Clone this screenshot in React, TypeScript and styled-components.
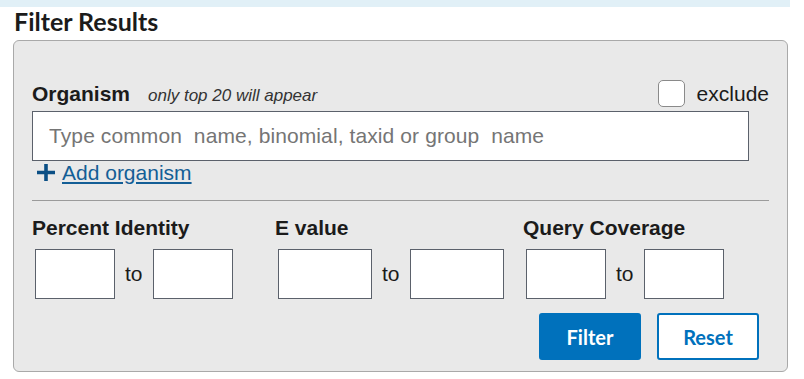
import React from "react"
import styled, { createGlobalStyle } from "styled-components"

const GlobalStyle = createGlobalStyle`
  body {
    margin: 0;
    background: #fff;
    font-family: "Liberation Sans", Arial, sans-serif;
    color: #1b1b1b;
  }
`

const TopBand = styled.div`
  width: 790px;
  height: 7px;
  background: #e1f0f7;
`

const Title = styled.h2`
  margin: 0 0 4px 14px;
  font-family: Lato, "Open Sans", sans-serif;
  font-weight: 700;
  font-size: 25px;
  line-height: 29px;
  color: #1b1b1b;
`

const Panel = styled.section`
  margin-left: 13px;
  width: 775px;
  height: 332px;
  box-sizing: border-box;
  padding: 39px 18px 11px 18px;
  background: #e9e9e9;
  border: 1px solid #a9a9a9;
  border-radius: 6px;
`

const HeaderRow = styled.div`
  display: flex;
  align-items: center;
  justify-content: space-between;
  height: 27px;
`

const LabelGroup = styled.div`
  display: flex;
  align-items: baseline;
  gap: 18px;
`

const Label = styled.span`
  font-weight: 700;
  font-size: 21px;
  line-height: 24px;
  color: #1b1b1b;
`

const Hint = styled.span`
  font-style: italic;
  font-size: 17px;
  color: #333;
`

const Exclude = styled.label`
  display: flex;
  align-items: center;
  gap: 12px;
  font-size: 21px;
  line-height: 24px;
  color: #1b1b1b;
`

const Checkbox = styled.span`
  width: 27px;
  height: 27px;
  box-sizing: border-box;
  background: #fff;
  border: 1px solid #8a8a8a;
  border-radius: 5px;
`

const TextInput = styled.input<{ $w: number }>`
  display: block;
  box-sizing: border-box;
  width: ${p => p.$w}px;
  height: 50px;
  margin: 0;
  padding: 0 16px;
  border: 1px solid #5b616b;
  border-radius: 0;
  background: #fff;
  font-family: "Liberation Sans", Arial, sans-serif;
  font-size: 21px;
  letter-spacing: 0.1px;
  color: #1b1b1b;
  outline: none;

  &::placeholder {
    color: #757575;
  }
`

const OrganismInput = styled(TextInput)`
  margin-top: 4px;
`

const AddLink = styled.a`
  display: inline-flex;
  align-items: center;
  gap: 7px;
  padding-left: 5px;
  font-size: 21px;
  line-height: 24px;
  color: #135e96;
  text-decoration: underline;
  text-underline-offset: 2px;
  cursor: pointer;

  svg {
    margin-top: -2px;
  }
`

const Divider = styled.hr`
  margin: 15px 0 15px 0;
  border: 0;
  border-top: 1px solid #9b9b9b;
  height: 0;
`

const Ranges = styled.div`
  display: grid;
  grid-template-columns: 243px 248px auto;
`

const RangeRow = styled.div`
  display: flex;
  align-items: center;
  gap: 10px;
  margin-top: 9px;
  padding-left: 3px;
`

const To = styled.span`
  font-size: 21px;
  color: #1b1b1b;
`

const ButtonRow = styled.div`
  display: flex;
  justify-content: flex-end;
  gap: 16px;
  margin-top: 14px;
  padding-right: 10px;
`

const Button = styled.button<{ $primary?: boolean }>`
  width: 102px;
  height: 47px;
  box-sizing: border-box;
  border-radius: 3px;
  border: 2px solid #0071bc;
  background: ${p => (p.$primary ? "#0071bc" : "#fff")};
  color: ${p => (p.$primary ? "#fff" : "#0071bc")};
  font-family: Lato, "Open Sans", sans-serif;
  font-weight: 700;
  font-size: 20px;
  cursor: pointer;
`

const PlusIcon = () => (
  <svg width="18" height="17" viewBox="0 0 18 17">
    <path d="M9 0v17M0 8.5h18" stroke="#0b4f85" strokeWidth="3.6" />
  </svg>
)

const ranges = [
  { label: "Percent Identity", w: 80 },
  { label: "E value", w: 94 },
  { label: "Query Coverage", w: 80 },
]

export default function App() {
  return (
    <>
      <GlobalStyle />
      <TopBand />
      <Title>Filter Results</Title>
      <Panel>
        <HeaderRow>
          <LabelGroup>
            <Label>Organism</Label>
            <Hint>only top 20 will appear</Hint>
          </LabelGroup>
          <Exclude>
            <Checkbox />
            exclude
          </Exclude>
        </HeaderRow>
        <OrganismInput
          $w={717}
          placeholder="Type common  name, binomial, taxid or group  name"
        />
        <AddLink>
          <PlusIcon />
          Add organism
        </AddLink>
        <Divider />
        <Ranges>
          {ranges.map(r => (
            <div key={r.label}>
              <Label>{r.label}</Label>
              <RangeRow>
                <TextInput $w={r.w} />
                <To>to</To>
                <TextInput $w={r.w} />
              </RangeRow>
            </div>
          ))}
        </Ranges>
        <ButtonRow>
          <Button $primary>Filter</Button>
          <Button>Reset</Button>
        </ButtonRow>
      </Panel>
    </>
  )
}
